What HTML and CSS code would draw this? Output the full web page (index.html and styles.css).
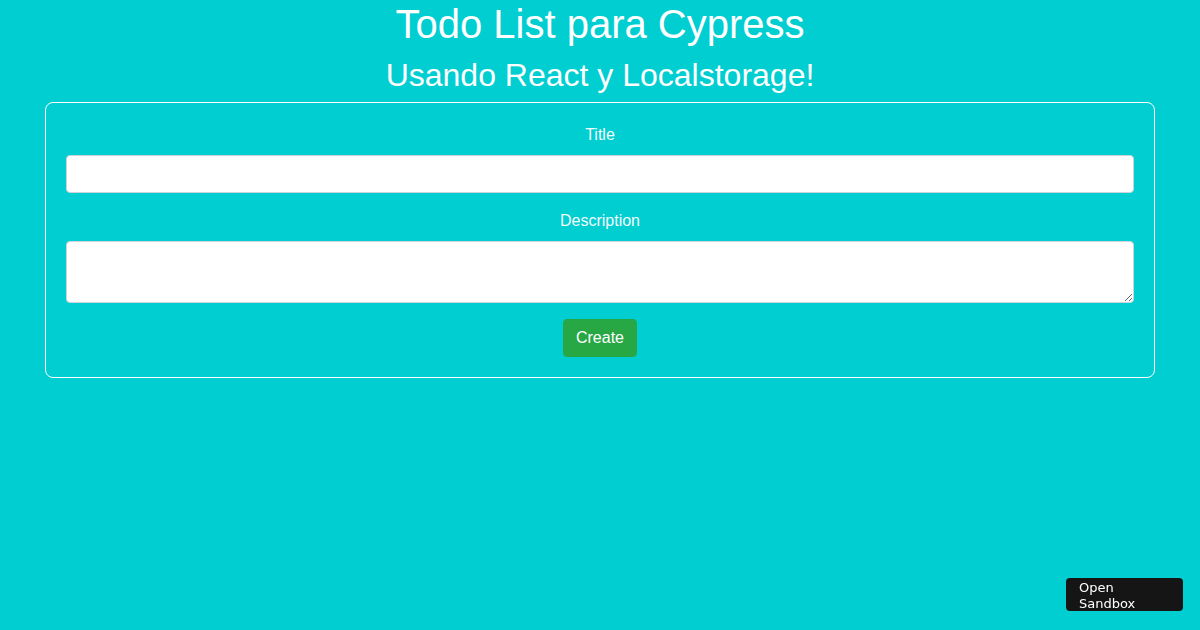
FILE: index.html
```html
<!DOCTYPE html>
<html lang="es">
<head>
<meta charset="utf-8">
<title>Todo List para Cypress</title>
<link rel="stylesheet" href="styles.css">
</head>
<body>
<div class="container">
  <h1 class="title">Todo List para Cypress</h1>
  <h2 class="subtitle">Usando React y Localstorage!</h2>
  <form class="card">
    <div class="form-group">
      <label class="label" for="title">Title</label>
      <input class="field" id="title" type="text">
    </div>
    <div class="form-group">
      <label class="label" for="desc">Description</label>
      <textarea class="field area" id="desc" rows="2"></textarea>
    </div>
    <div class="actions">
      <button class="btn" type="button">Create</button>
    </div>
  </form>
</div>
<a class="sandbox">Open Sandbox</a>
</body>
</html>
```
FILE: styles.css
```css
* { box-sizing: border-box; }
html, body { margin: 0; padding: 0; }
body {
  background: #00ced1;
  font-family: "Liberation Sans", Arial, sans-serif;
  font-size: 16px;
  line-height: 1.5;
  color: #fff;
  height: 630px;
  overflow: hidden;
}
.container {
  width: 1140px;
  margin: 0 auto;
  padding: 0 15px;
  text-align: center;
}
.title {
  margin: 0 0 8px;
  font-family: "Liberation Sans", Arial, sans-serif;
  font-size: 40px;
  font-weight: 400;
  line-height: 1.2;
}
.subtitle {
  margin: 0 0 8px;
  font-family: "Liberation Sans", Arial, sans-serif;
  font-size: 32px;
  font-weight: 400;
  line-height: 1.2;
}
.card {
  border: 1px solid #fff;
  border-radius: 8px;
  padding: 20px;
  margin: 0;
}
.form-group {
  margin-bottom: 16px;
  display: flex;
  flex-direction: column;
}
.label {
  display: block;
  margin-bottom: 8px;
  color: #f4fbfb;
}
.field {
  display: block;
  width: 100%;
  height: 38px;
  padding: 6px 12px;
  font-family: inherit;
  font-size: 16px;
  line-height: 1.5;
  color: #495057;
  background: #fff;
  border: 1px solid #ced4da;
  border-radius: 4px;
  margin: 0;
}
.area {
  height: 62px;
  resize: vertical;
}
.actions { display: flex; justify-content: center; }
.btn {
  background: #28a745;
  border: 1px solid #28a745;
  color: #fff;
  font-family: inherit;
  font-size: 16px;
  line-height: 1.5;
  padding: 6px 12px;
  border-radius: 4px;
  height: 38px;
}
.sandbox {
  position: fixed;
  right: 17px;
  bottom: 19px;
  width: 117px;
  height: 33px;
  background: #151515;
  border-radius: 4px;
  color: #fff;
  font-family: "DejaVu Sans", sans-serif;
  font-size: 13px;
  line-height: 16px;
  padding: 2px 12px 0 13px;
  text-align: left;
}
```
